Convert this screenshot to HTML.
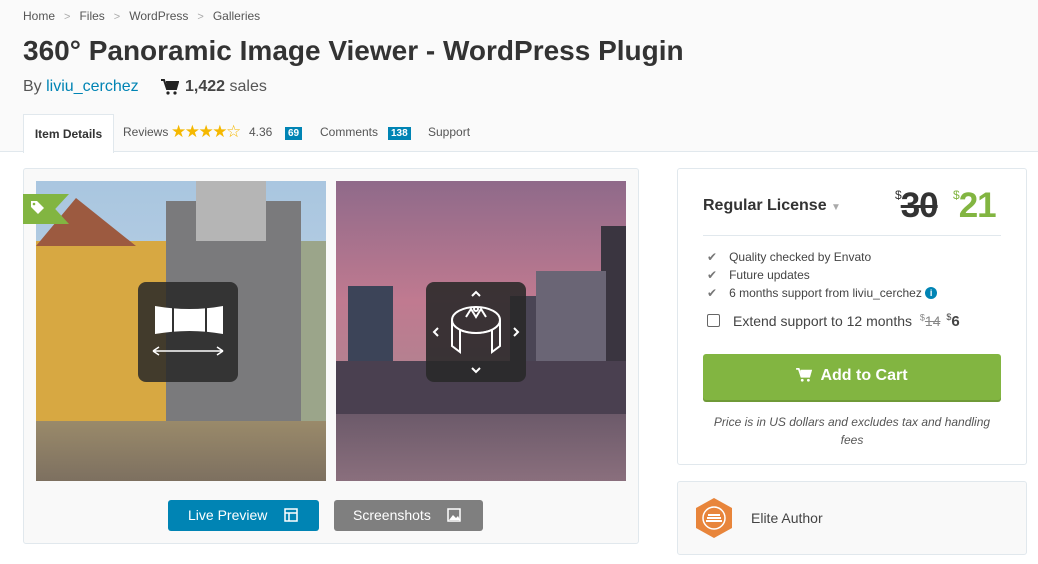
<!DOCTYPE html>
<html><head><meta charset="utf-8"><style>
*{box-sizing:border-box;margin:0;padding:0}
body{width:1038px;height:564px;overflow:hidden;background:#fff;font-family:"Liberation Sans",sans-serif;color:#333;position:relative}
.hdr{position:absolute;left:0;top:0;width:1038px;height:152px;background:#fafafa;border-bottom:1px solid #e1e8ed}
.abs{position:absolute}
.bc{left:23px;top:9px;font-size:12px;color:#555}
.bc span.sep{color:#aaa;margin:0 9px;font-size:11px}
h1{position:absolute;left:23px;top:35px;font-size:28px;font-weight:bold;color:#333;letter-spacing:0}
.by{left:23px;top:78px;font-size:16px;color:#555}
.by a{color:#0084b4;text-decoration:none}
.tab{left:23px;top:114px;width:91px;height:39px;background:#fff;border:1px solid #e1e8ed;border-bottom:none;font-size:12px;font-weight:bold;color:#333;padding-top:12px;text-align:center}
.tabs{top:125px;font-size:12px;color:#555}
.badge{background:#0084b4;color:#fff;font-size:10px;font-weight:bold;padding:1px 3px}
.box{border:1px solid #e1e8ed;border-radius:3px}
.btn{position:absolute;height:31px;border-radius:3px;color:#fff;font-size:14px;line-height:31px}
</style></head><body>
<div class="hdr"></div>
<div class="abs bc">Home<span class="sep">&gt;</span>Files<span class="sep">&gt;</span>WordPress<span class="sep">&gt;</span>Galleries</div>
<h1>360° Panoramic Image Viewer - WordPress Plugin</h1>
<div class="abs by">By <a>liviu_cerchez</a></div>
<svg class="abs" style="left:161px;top:79px" width="18" height="16" viewBox="0 0 18 16"><path d="M0 1h3l3 9h9l2-7H5" fill="none" stroke="#222" stroke-width="2"/><path d="M5 3h12l-2 7H6z" fill="#222"/><circle cx="7" cy="14" r="1.6" fill="#222"/><circle cx="14" cy="14" r="1.6" fill="#222"/></svg>
<div class="abs" style="left:185px;top:78px;font-size:16px;color:#555"><b style="color:#444">1,422</b> sales</div>
<div class="abs tab">Item Details</div>
<div class="abs tabs" style="left:123px">Reviews</div>
<div class="abs" style="left:171px;top:122px;color:#f5b800;font-size:17px;letter-spacing:-1.5px">★★★★☆</div>
<div class="abs tabs" style="left:249px">4.36</div>
<div class="abs tabs" style="left:285px"><span class="badge">69</span></div>
<div class="abs tabs" style="left:320px">Comments</div>
<div class="abs tabs" style="left:388px"><span class="badge">138</span></div>
<div class="abs tabs" style="left:428px">Support</div>

<div class="abs box" style="left:23px;top:168px;width:616px;height:376px;background:#f9f9f9"></div>
<div class="abs" style="left:36px;top:181px;width:290px;height:300px;overflow:hidden;background:linear-gradient(#a9c6e0,#c9d8e6)">
 <div class="abs" style="left:0;top:60px;width:140px;height:240px;background:#d7a842"></div>
 <div class="abs" style="left:0;top:5px;width:100px;height:60px;background:#9c5a40;clip-path:polygon(0 100%,40% 20%,100% 100%)"></div>
 <div class="abs" style="left:130px;top:20px;width:135px;height:270px;background:#7a7a7c"></div>
 <div class="abs" style="left:160px;top:0;width:70px;height:60px;background:#b5b5b5"></div>
 <div class="abs" style="left:265px;top:60px;width:25px;height:230px;background:#9ba58a"></div>
 <div class="abs" style="left:0;top:240px;width:290px;height:60px;background:linear-gradient(#9a8a6a,#7d7060)"></div>
 <div class="abs" style="left:102px;top:101px;width:100px;height:100px;border-radius:8px;background:rgba(40,40,40,.85)"></div>
 <svg class="abs" style="left:114px;top:120px" width="76" height="62" viewBox="0 0 76 62"><path d="M5 5q35 6 68 0v28q-33-6-68 0z" fill="#fff"/><path d="M23 6v26M56 6v26" stroke="#333" stroke-width="2"/><path d="M3 50h70M3 50l6-4M3 50l6 4M73 50l-6-4M73 50l-6 4" stroke="#fff" stroke-width="1.5" fill="none"/></svg>
</div>
<div class="abs" style="left:23px;top:194px;width:46px;height:30px;background:#82b541;clip-path:polygon(0 0,100% 0,70% 50%,100% 100%,0 100%)"></div>
<svg class="abs" style="left:29px;top:199px" width="16" height="16" viewBox="0 0 16 16"><path d="M2 2h6l7 7-6 6-7-7z" fill="#fff"/><circle cx="5" cy="5" r="1.3" fill="#82b541"/></svg>
<div class="abs" style="left:336px;top:181px;width:290px;height:300px;overflow:hidden;background:linear-gradient(#8f6a8a,#c07a90 40%,#b58090 60%)">
 <div class="abs" style="left:12px;top:105px;width:45px;height:130px;background:#3c4458"></div>
 <div class="abs" style="left:0;top:115px;width:290px;height:125px;background:linear-gradient(90deg,transparent 60%,#4a4555 60%)"></div>
 <div class="abs" style="left:265px;top:45px;width:25px;height:195px;background:#3a3540"></div>
 <div class="abs" style="left:200px;top:90px;width:70px;height:150px;background:#6a6575"></div>
 <div class="abs" style="left:0;top:180px;width:290px;height:60px;background:#4a4050"></div>
 <div class="abs" style="left:0;top:233px;width:290px;height:67px;background:linear-gradient(#6c5a6a,#8a6f7d)"></div>
 <div class="abs" style="left:90px;top:101px;width:100px;height:100px;border-radius:8px;background:rgba(40,40,40,.88)"></div>
 <svg class="abs" style="left:90px;top:101px" width="100" height="100" viewBox="0 0 100 100" fill="none" stroke="#fff" stroke-width="2"><path d="M46 14l4-4 4 4M46 86l4 4 4-4M12 46l-4 4 4 4M88 46l4 4-4 4"/><ellipse cx="50" cy="38" rx="24" ry="13"/><path d="M26 38v26l8 6V48M74 38v26l-8 6V48M34 48q16 6 32 0"/><path d="M40 35l5-8 5 8 5-8 5 8"/><circle cx="50" cy="27" r="2"/></svg>
</div>
<div class="btn" style="left:168px;top:500px;width:151px;background:#0084b4;padding-left:20px">Live Preview<svg style="position:absolute;left:116px;top:8px" width="14" height="14" viewBox="0 0 14 14" fill="none" stroke="#fff" stroke-width="1.5"><rect x="1" y="1" width="12" height="12"/><path d="M1 5h12M5 5v8"/></svg></div>
<div class="btn" style="left:334px;top:500px;width:149px;background:#7f7f7f;padding-left:19px">Screenshots<svg style="position:absolute;left:113px;top:8px" width="14" height="14" viewBox="0 0 14 14"><rect x="1" y="1" width="12" height="12" fill="none" stroke="#fff" stroke-width="1.5"/><path d="M2 12l4-5 3 3 2-2 2 4z" fill="#fff"/></svg></div>

<div class="abs box" style="left:677px;top:168px;width:350px;height:297px;background:#fff"></div>
<div class="abs" style="left:703px;top:197px;font-size:16px;font-weight:bold;color:#333">Regular License <span style="color:#aaa;font-size:10px">▼</span></div>
<div class="abs" style="left:895px;top:186px;font-size:35px;font-weight:bold;color:#333;letter-spacing:-1px"><sup style="font-size:12px;font-weight:normal;vertical-align:top;position:relative;top:2px">$</sup><s>30</s></div>
<div class="abs" style="left:953px;top:186px;font-size:35px;font-weight:bold;color:#82b541;letter-spacing:-1px"><sup style="font-size:12px;font-weight:normal;vertical-align:top;position:relative;top:2px">$</sup>21</div>
<div class="abs" style="left:703px;top:235px;width:298px;height:1px;background:#e1e8ed"></div>
<div class="abs" style="left:707px;top:248px;font-size:12px;color:#444;line-height:18px">
<div><span style="color:#777;margin-right:12px">✔</span>Quality checked by Envato</div>
<div><span style="color:#777;margin-right:12px">✔</span>Future updates</div>
<div><span style="color:#777;margin-right:12px">✔</span>6 months support from liviu_cerchez <span style="display:inline-block;width:12px;height:12px;border-radius:50%;background:#0084b4;color:#fff;font-size:9px;font-weight:bold;text-align:center;line-height:12px;vertical-align:1px">i</span></div>
</div>
<div class="abs" style="left:707px;top:314px;width:13px;height:13px;border:1px solid #666;border-radius:2px"></div>
<div class="abs" style="left:733px;top:312px;font-size:14px;color:#444">Extend support to 12 months <span style="color:#888;margin-left:4px"><sup style="font-size:9px">$</sup><s>14</s></span> <span style="font-weight:bold;font-size:15px;margin-left:2px"><sup style="font-size:9px;font-weight:normal">$</sup>6</span></div>
<div class="abs" style="left:703px;top:354px;width:298px;height:46px;background:#82b541;border-radius:3px;box-shadow:0 2px 0 #6f9a37;color:#fff;font-size:16px;font-weight:bold;text-align:center;line-height:44px"><svg style="vertical-align:-2px;margin-right:8px" width="16" height="14" viewBox="0 0 18 16"><path d="M0 1h3l3 9h9l2-7H5" fill="none" stroke="#fff" stroke-width="2"/><path d="M5 3h12l-2 7H6z" fill="#fff"/><circle cx="7" cy="14" r="1.6" fill="#fff"/><circle cx="14" cy="14" r="1.6" fill="#fff"/></svg>Add to Cart</div>
<div class="abs" style="left:703px;top:413px;width:298px;text-align:center;font-size:12px;font-style:italic;color:#555;line-height:18px">Price is in US dollars and excludes tax and handling fees</div>

<div class="abs box" style="left:677px;top:481px;width:350px;height:74px;background:#f9f9f9"></div>
<svg class="abs" style="left:694px;top:497px" width="40" height="42" viewBox="0 0 40 42"><path d="M20 1l18 10v20L20 41 2 31V11z" fill="#e8853b"/><circle cx="20" cy="21" r="11" fill="none" stroke="#fff" stroke-width="1.5"/><path d="M14 18h12M13 21h14M12 24h16" stroke="#fff" stroke-width="2"/></svg>
<div class="abs" style="left:751px;top:510px;font-size:14px;color:#444">Elite Author</div>
</body></html>
